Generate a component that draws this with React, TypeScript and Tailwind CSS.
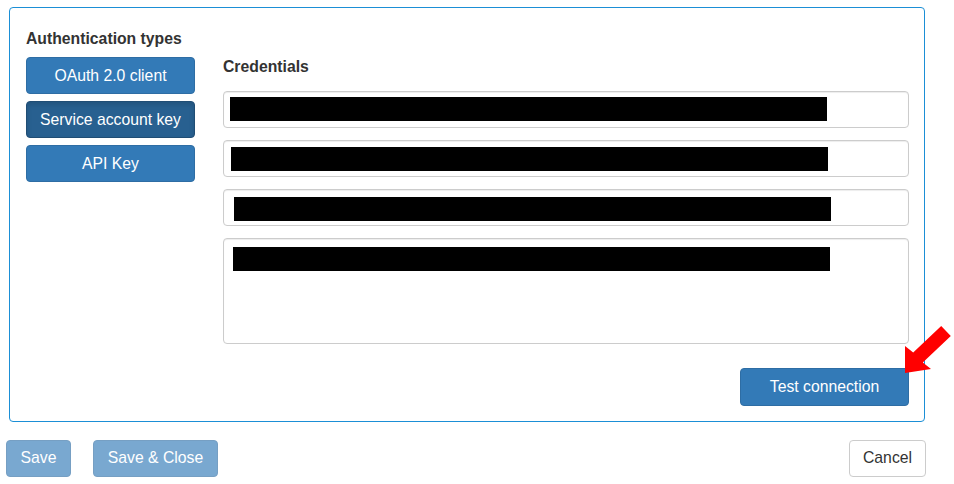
import React from "react";

const authTypes = [
  { label: "OAuth 2.0 client", active: false },
  { label: "Service account key", active: true },
  { label: "API Key", active: false },
];

// redaction bars: [left offset, top offset]
const fields: [number, number][] = [
  [7, 6],
  [8, 7],
  [11, 8],
];

const App: React.FC = () => {
  return (
    <div
      className="relative w-[954px] h-[484px] overflow-hidden bg-white text-[#333] text-[15.75px] leading-[22px]"
      style={{ fontFamily: '"Liberation Sans", Arial, sans-serif' }}
    >
      <div className="ml-[9px] mr-[29px] pt-[7px]">
        <div className="border border-[#1b8fd6] rounded-[4px] pl-4 pr-[15px] pt-[20px] pb-[15px] flex gap-[28px]">
          <div className="w-[169px] shrink-0">
            <div className="font-bold">Authentication types</div>
            <div className="mt-[7px] flex flex-col gap-[7px]">
              {authTypes.map((t) => (
                <button
                  key={t.label}
                  className={
                    t.active
                      ? "h-[37px] rounded-[4px] border border-[#204d74] bg-[#286090] text-white shadow-[inset_0_3px_5px_rgba(0,0,0,0.125)]"
                      : "h-[37px] rounded-[4px] border border-[#2e6da4] bg-[#337ab7] text-white"
                  }
                >
                  {t.label}
                </button>
              ))}
            </div>
          </div>

          <div className="flex-1 pt-[28px]">
            <div className="font-bold">Credentials</div>
            <div className="mt-[13px] flex flex-col gap-[12px]">
              {fields.map(([l, t], i) => (
                <div
                  key={i}
                  className="h-[37px] rounded-[4px] border border-[#ccc] shadow-[inset_0_1px_1px_rgba(0,0,0,0.075)]"
                  style={{ paddingLeft: l - 1, paddingTop: t - 1 }}
                >
                  <div className="w-[597px] h-[24px] bg-black" />
                </div>
              ))}
              <div className="h-[106px] rounded-[4px] border border-[#ccc] pl-[9px] pt-[8px] shadow-[inset_0_1px_1px_rgba(0,0,0,0.075)]">
                <div className="w-[597px] h-[24px] bg-black" />
              </div>
            </div>
            <div className="mt-[24px] flex justify-end">
              <button className="w-[169px] h-[38px] pb-px rounded-[4px] border border-[#2e6da4] bg-[#337ab7] text-white">
                Test connection
              </button>
            </div>
          </div>
        </div>
      </div>

      <div className="mt-[18px] pl-[6px] pr-[28px] flex items-center">
        <button className="w-[65px] h-[37px] pb-px rounded-[4px] border border-[#2e6da4] bg-[#337ab7] text-white opacity-65">
          Save
        </button>
        <button className="ml-[22px] w-[125px] h-[37px] pb-px rounded-[4px] border border-[#2e6da4] bg-[#337ab7] text-white opacity-65">
          Save &amp; Close
        </button>
        <button className="ml-auto w-[77px] h-[37px] pb-px rounded-[4px] border border-[#ccc] bg-white text-[#333]">
          Cancel
        </button>
      </div>

      <svg
        className="absolute left-[895px] top-[320px]"
        width="59"
        height="56"
        viewBox="0 0 59 56"
      >
        <polygon
          points="10,53 10,26 18.2,32.4 46.2,5.9 55.8,16.1 27.8,42.6 36,49"
          fill="#ff0000"
        />
      </svg>
    </div>
  );
};

export default App;
